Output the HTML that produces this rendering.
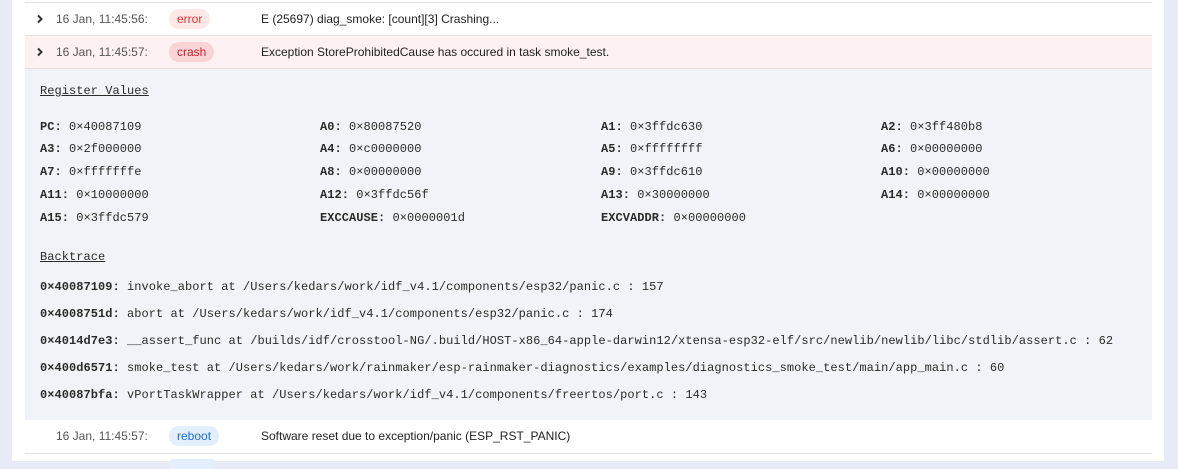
<!DOCTYPE html>
<html><head><style>
*{margin:0;padding:0;box-sizing:border-box}
body{width:1178px;height:461px;overflow:hidden;background:#e8ebf6;font-family:"Liberation Sans",sans-serif;position:relative}
.panel{position:absolute;left:12px;top:0;width:1152px;height:461px;background:#fff}
.row{position:absolute;left:25px;width:1127px;height:33px;border-top:1px solid #e0e0e0;font-size:12px;color:#222}
.row .chev{position:absolute;left:11px;top:11px}
.row .ts{position:absolute;left:31px;top:9px;color:#555}
.badge{position:absolute;left:144px;top:6px;height:20px;line-height:20px;padding:0 8px;border-radius:10px;font-size:12px}
.row .msg{position:absolute;left:236px;top:9px;color:#222}
.exp{position:absolute;left:25px;top:68px;width:1127px;height:352px;background:#f2f3f8;border-top:1px solid #e6dede;font-family:"Liberation Mono",monospace;font-size:12px;color:#2a2a2a;letter-spacing:0.05px}
.t{position:absolute;white-space:pre}
.h{text-decoration:underline;left:15px}
b{font-weight:bold}
</style></head><body>
<div class="panel"></div>
<div class="row" style="top:2px;background:#fff"><svg class="chev" width="8" height="10" viewBox="0 0 8 10"><path d="M2 1.5 L5.5 5 L2 8.5" fill="none" stroke="#333" stroke-width="2"/></svg><span class="ts">16 Jan, 11:45:56:</span><span class="badge" style="background:#fde8e8;color:#d33">error</span><span class="msg">E (25697) diag_smoke: [count][3] Crashing...</span></div>
<div class="row" style="top:35px;background:#fdf1f1"><svg class="chev" width="8" height="10" viewBox="0 0 8 10"><path d="M2 1.5 L5.5 5 L2 8.5" fill="none" stroke="#333" stroke-width="2"/></svg><span class="ts">16 Jan, 11:45:57:</span><span class="badge" style="background:#f9d4d6;color:#d0202a">crash</span><span class="msg">Exception StoreProhibitedCause has occured in task smoke_test.</span></div>
<div class="exp">
<div class="t h" style="top:15px">Register Values</div>
<div class="t" style="left:15px;top:51px"><b>PC:</b> 0×40087109</div>
<div class="t" style="left:295px;top:51px"><b>A0:</b> 0×80087520</div>
<div class="t" style="left:576px;top:51px"><b>A1:</b> 0×3ffdc630</div>
<div class="t" style="left:856px;top:51px"><b>A2:</b> 0×3ff480b8</div>
<div class="t" style="left:15px;top:73px"><b>A3:</b> 0×2f000000</div>
<div class="t" style="left:295px;top:73px"><b>A4:</b> 0×c0000000</div>
<div class="t" style="left:576px;top:73px"><b>A5:</b> 0×ffffffff</div>
<div class="t" style="left:856px;top:73px"><b>A6:</b> 0×00000000</div>
<div class="t" style="left:15px;top:96px"><b>A7:</b> 0×fffffffe</div>
<div class="t" style="left:295px;top:96px"><b>A8:</b> 0×00000000</div>
<div class="t" style="left:576px;top:96px"><b>A9:</b> 0×3ffdc610</div>
<div class="t" style="left:856px;top:96px"><b>A10:</b> 0×00000000</div>
<div class="t" style="left:15px;top:119px"><b>A11:</b> 0×10000000</div>
<div class="t" style="left:295px;top:119px"><b>A12:</b> 0×3ffdc56f</div>
<div class="t" style="left:576px;top:119px"><b>A13:</b> 0×30000000</div>
<div class="t" style="left:856px;top:119px"><b>A14:</b> 0×00000000</div>
<div class="t" style="left:15px;top:142px"><b>A15:</b> 0×3ffdc579</div>
<div class="t" style="left:295px;top:142px"><b>EXCCAUSE:</b> 0×0000001d</div>
<div class="t" style="left:576px;top:142px"><b>EXCVADDR:</b> 0×00000000</div>
<div class="t h" style="top:181px">Backtrace</div>
<div class="t" style="left:15px;top:211px"><b>0×40087109:</b> invoke_abort at /Users/kedars/work/idf_v4.1/components/esp32/panic.c : 157</div>
<div class="t" style="left:15px;top:238px"><b>0×4008751d:</b> abort at /Users/kedars/work/idf_v4.1/components/esp32/panic.c : 174</div>
<div class="t" style="left:15px;top:265px"><b>0×4014d7e3:</b> __assert_func at /builds/idf/crosstool-NG/.build/HOST-x86_64-apple-darwin12/xtensa-esp32-elf/src/newlib/newlib/libc/stdlib/assert.c : 62</div>
<div class="t" style="left:15px;top:292px"><b>0×400d6571:</b> smoke_test at /Users/kedars/work/rainmaker/esp-rainmaker-diagnostics/examples/diagnostics_smoke_test/main/app_main.c : 60</div>
<div class="t" style="left:15px;top:319px"><b>0×40087bfa:</b> vPortTaskWrapper at /Users/kedars/work/idf_v4.1/components/freertos/port.c : 143</div>
</div>
<div class="row" style="top:420px;border-top:none;border-bottom:1px solid #e0e0e0;height:34px"><span class="ts">16 Jan, 11:45:57:</span><span class="badge" style="background:#e3effd;color:#1a6fd6">reboot</span><span class="msg">Software reset due to exception/panic (ESP_RST_PANIC)</span></div>
<div style="position:absolute;left:169px;top:459px;width:48px;height:10px;border-radius:10px;background:#e3effd"></div>
</body></html>
